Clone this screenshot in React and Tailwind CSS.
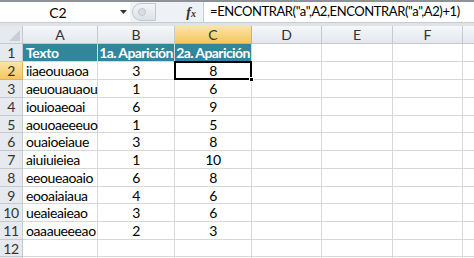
import React from 'react';

const rows = [
  ['iiaeouuaoa', '3', '8'],
  ['aeuouauaou', '1', '6'],
  ['iouioaeoai', '6', '9'],
  ['aouoaeeeuo', '1', '5'],
  ['ouaioeiaue', '3', '8'],
  ['aiuiuieiea', '1', '10'],
  ['eeoueaoaio', '6', '8'],
  ['eooaiaiaua', '4', '6'],
  ['ueaieaieao', '3', '6'],
  ['oaaaueeeao', '2', '3'],
];

const font = { fontFamily: 'Lato, "Liberation Sans", sans-serif' };

const cols = [
  ['D', 'w-[70px]'],
  ['E', 'w-[71px]'],
  ['F', 'w-[70px]'],
  ['G', 'w-[20px]'],
];

function RowNum({ n, active }) {
  return (
    <div
      className={`w-[23px] shrink-0 flex items-center justify-center border-r border-b text-[14px] tracking-[-0.4px] text-[#333] ${
        active ? 'bg-gradient-to-b from-[#fbe4a5] to-[#f5c65c] border-[#d9b25a]' : 'bg-[#e6eaee] border-[#c5cad1]'
      }`}
    >
      {n}
    </div>
  );
}

function Cell({ w, children, align = 'center', className = '' }) {
  const a = align === 'left' ? 'justify-start pl-[3px]' : 'justify-center';
  return (
    <div
      className={`${w} shrink-0 flex items-center ${a} whitespace-nowrap border-r border-b border-[#d8d8d8] text-[14px] tracking-[-0.4px] text-black ${className}`}
    >
      {children}
    </div>
  );
}

function EmptyCells() {
  return cols.map(([k, w]) => <Cell key={k} w={w} />);
}

export default function App() {
  return (
    <div className="w-[474px] h-[258px] overflow-hidden bg-white" style={font}>
      {/* formula bar */}
      <div className="h-[2px] bg-[#8e9296]" />
      <div className="h-[21px] flex bg-[#eef1f5] border-b border-[#c7ccd3]">
        <div className="w-[116px] shrink-0 bg-white flex items-center justify-center text-[14px] text-black">C2</div>
        <div className="w-[14px] shrink-0 bg-white flex items-center justify-center">
          <svg width="7" height="4" viewBox="0 0 7 4"><path d="M0 0h7L3.5 4z" fill="#333" /></svg>
        </div>
        <div className="w-[73px] shrink-0 flex items-center pl-[2px]">
          <div className="w-[24px] h-[18px] rounded-l-full bg-gradient-to-b from-[#f4f5f7] to-[#dde1e6] border border-[#c3c8ce] flex items-center pl-[5px]">
            <div className="w-[8px] h-[8px] rounded-full bg-[#d9dde2] border border-[#c3c8ce]" />
          </div>
          <span className="ml-auto mr-[7px] text-[14px] italic font-bold text-[#333]" style={{ fontFamily: '"Liberation Serif", serif' }}>
            f<span className="text-[10px]">x</span>
          </span>
        </div>
        <div className="flex-1 min-w-0 overflow-hidden bg-white border-l border-[#c7ccd3] flex items-center pl-[6px] text-[13px] tracking-[-0.4px] text-black whitespace-nowrap">
          =ENCONTRAR("a",A2,ENCONTRAR("a",A2)+1)
        </div>
      </div>
      <div className="h-[3px] bg-[#dfe3e8]" />
      {/* column headers */}
      <div className="h-[18px] flex">
        <div className="w-[23px] shrink-0 bg-[#e6eaee] border-r border-b border-[#c5cad1] relative">
          <svg className="absolute right-[2px] bottom-[2px]" width="11" height="11" viewBox="0 0 11 11"><path d="M11 0V11H0z" fill="#c9ced4" /></svg>
        </div>
        {[
          ['A', 'w-[75px]'],
          ['B', 'w-[77px]'],
          ['C', 'w-[77px]'],
          ['D', 'w-[70px]'],
          ['E', 'w-[71px]'],
          ['F', 'w-[70px]'],
          ['', 'w-[20px]'],
        ].map(([l, w]) => (
          <div
            key={l + w}
            className={`${w} shrink-0 flex items-center justify-center border-r border-b text-[14px] text-[#333] ${
              l === 'C' ? 'bg-gradient-to-b from-[#fbe4a5] to-[#f5c65c] border-[#d9b25a]' : 'bg-gradient-to-b from-[#f5f7f9] to-[#e3e7ec] border-[#c5cad1]'
            }`}
          >
            {l}
          </div>
        ))}
      </div>
      {/* row 1 */}
      <div className="h-[18px] flex">
        <RowNum n="1" />
        <Cell w="w-[75px]" align="left" className="bg-[#31869b] text-white font-bold border-[#31869b]">Texto</Cell>
        <Cell w="w-[77px]" className="bg-[#31869b] text-white font-bold border-[#31869b] text-[12px] tracking-[-0.6px]">1a. Aparición</Cell>
        <Cell w="w-[77px]" className="bg-[#31869b] text-white font-bold border-[#31869b] text-[12px] tracking-[-0.6px]">2a. Aparición</Cell>
        <EmptyCells />
      </div>
      {rows.map((r, i) => (
        <div key={i} className={`${i === 3 || i === 7 ? 'h-[17px]' : 'h-[18px]'} flex`}>
          <RowNum n={i + 2} active={i === 0} />
          <Cell w="w-[75px]" align="left">{r[0]}</Cell>
          <Cell w="w-[77px]">{r[1]}</Cell>
          <Cell w="w-[77px]" className={i === 0 ? 'relative' : ''}>
            {r[2]}
            {i === 0 && (
              <>
                <div className="absolute left-[-1px] top-[-1px] right-[-1px] bottom-[-1px] border-2 border-black" />
                <div className="absolute right-[-3px] bottom-[-3px] w-[5px] h-[5px] bg-black border border-white" />
              </>
            )}
          </Cell>
          <EmptyCells />
        </div>
      ))}
      <div className="h-[17px] flex">
        <RowNum n="12" />
        <Cell w="w-[75px]" />
        <Cell w="w-[77px]" />
        <Cell w="w-[77px]" />
        <EmptyCells />
      </div>
      <div className="h-[18px] flex">
        <RowNum n="" />
        <Cell w="w-[75px]" />
        <Cell w="w-[77px]" />
        <Cell w="w-[77px]" />
        <EmptyCells />
      </div>
    </div>
  );
}
